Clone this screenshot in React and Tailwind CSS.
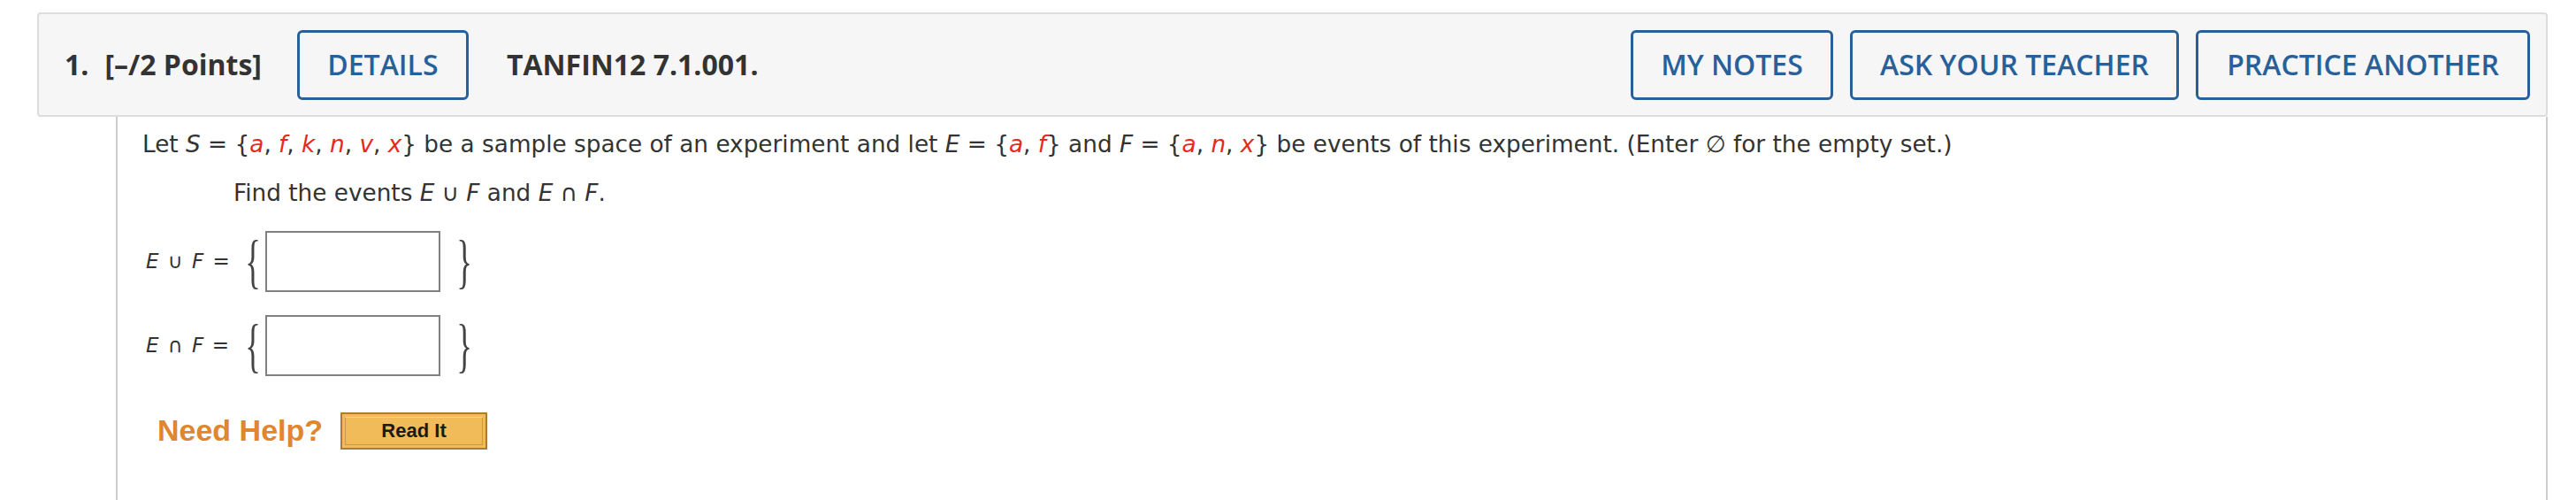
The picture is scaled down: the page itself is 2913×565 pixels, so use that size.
import React from "react";

const body = { fontFamily: '"DejaVu Sans", Verdana, sans-serif' };
const head = { fontFamily: '"Open Sans", "Liberation Sans", sans-serif' };

function V({ children }) {
  return <i className="text-[#e8271e]">{children}</i>;
}

function HeadButton({ w, children }) {
  return (
    <div className={`${w} h-[79px] flex items-center justify-center border-[3px] border-[#28609a] rounded-[6px] text-[#28609a] font-semibold text-[32px]`}>
      {children}
    </div>
  );
}

function Brace({ children }) {
  return (
    <span
      className="inline-block text-[46px] leading-none text-[#444] scale-y-[1.45] scale-x-[0.8]"
      style={{ fontFamily: '"Liberation Serif", serif' }}
    >
      {children}
    </span>
  );
}

function AnswerRow({ label }) {
  return (
    <div className="flex items-center h-[69px]">
      <div className="w-[110px] text-[23px] tracking-[1.5px] text-[#333] whitespace-pre" style={body}>
        {label}
      </div>
      <div className="w-[25px] flex justify-start">
        <Brace>{"{"}</Brace>
      </div>
      <div className="w-[198px] h-[69px] border-2 border-[#808080] bg-white" />
      <div className="ml-[16px]">
        <Brace>{"}"}</Brace>
      </div>
    </div>
  );
}

export default function App() {
  return (
    <div className="w-[2913px] h-[565px] bg-white overflow-hidden pl-[42px] pr-[32px] pt-[14px]">
      <div
        className="h-[118px] border-2 border-[#dddddd] bg-[#f6f6f6] rounded-[4px] flex items-center pl-[29px] pr-[18px] text-[#333]"
        style={head}
      >
        <span className="font-bold text-[32px]">1.</span>
        <span className="ml-[18px] font-bold text-[32px]">[–/2 Points]</span>
        <div className="ml-[40px]">
          <HeadButton w="w-[194px]">DETAILS</HeadButton>
        </div>
        <span className="ml-[43px] font-bold text-[32px]">TANFIN12 7.1.001.</span>
        <div className="ml-auto flex gap-[19px]">
          <HeadButton w="w-[229px]">MY NOTES</HeadButton>
          <HeadButton w="w-[372px]">ASK YOUR TEACHER</HeadButton>
          <HeadButton w="w-[378px]">PRACTICE ANOTHER</HeadButton>
        </div>
      </div>

      <div className="ml-[89px] h-[433px] border-x-2 border-[#cccccc] pl-[28px] pt-[13px] text-[#333]" style={body}>
        <p className="text-[26.3px] leading-[36px] whitespace-nowrap">
          Let <i>S</i> = {"{"}
          <V>a</V>, <V>f</V>, <V>k</V>, <V>n</V>, <V>v</V>, <V>x</V>
          {"}"} be a sample space of an experiment and let <i>E</i> = {"{"}
          <V>a</V>, <V>f</V>
          {"}"} and <i>F</i> = {"{"}
          <V>a</V>, <V>n</V>, <V>x</V>
          {"}"} be events of this experiment. (Enter ∅ for the empty set.)
        </p>
        <p className="mt-[19px] ml-[103px] text-[26.3px] leading-[36px]">
          Find the events <i>E</i> ∪ <i>F</i> and <i>E</i> ∩ <i>F</i>.
        </p>

        <div className="ml-[4px] mt-[25px] flex flex-col gap-[26px]">
          <AnswerRow label={<><i>E</i> ∪ <i>F</i> =</>} />
          <AnswerRow label={<><i>E</i> ∩ <i>F</i><span className="ml-[8px]">=</span></>} />
        </div>

        <div className="ml-[17px] mt-[36px] flex items-center gap-[20px]">
          <span
            className="text-[34px] font-bold text-[#e0862e]"
            style={{ fontFamily: '"Liberation Sans", Arial, sans-serif' }}
          >
            Need Help?
          </span>
          <div className="w-[166px] h-[42px] border-2 border-[#b07a35] bg-[#f0bb58] p-[3px]">
            <div
              className="h-full border border-[#c9974a] border-t-[#f7d99a] flex items-center justify-center text-[22px] font-bold text-[#1a1a1a]"
              style={{ fontFamily: '"Liberation Sans", Arial, sans-serif' }}
            >
              Read It
            </div>
          </div>
        </div>
      </div>
    </div>
  );
}
